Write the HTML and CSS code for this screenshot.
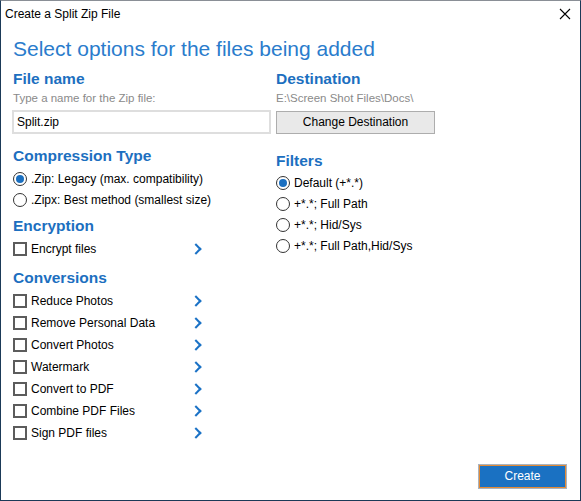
FILE: index.html
```html
<!DOCTYPE html>
<html>
<head>
<meta charset="utf-8">
<link rel="stylesheet" href="styles.css">
</head>
<body>
<div class="window">
  <div class="titlebar">
    <span class="title">Create a Split Zip File</span>
    <svg class="close" width="12" height="12" viewBox="0 0 12 12"><path d="M1 1L11 11M11 1L1 11" stroke="#000" stroke-width="1.1" fill="none"/></svg>
  </div>
  <div class="content">
    <h1 class="main-heading">Select options for the files being added</h1>
    <div class="grid">
      <div class="col">
        <h2 class="section">File name</h2>
        <div class="hint">Type a name for the Zip file:</div>
        <div class="input">Split.zip</div>
      </div>
      <div class="col">
        <h2 class="section">Destination</h2>
        <div class="hint">E:\Screen Shot Files\Docs\</div>
        <div class="btn">Change Destination</div>
      </div>
      <div class="col">
        <h2 class="section sec-compress">Compression Type</h2>
        <div class="radio-row"><span class="radio checked"></span>.Zip: Legacy (max. compatibility)</div>
        <div class="radio-row"><span class="radio"></span>.Zipx: Best method (smallest size)</div>

        <h2 class="section sec-encrypt">Encryption</h2>
        <div class="check-row"><span class="check"></span><span class="label">Encrypt files</span><span class="chev"></span></div>

        <h2 class="section sec-conv">Conversions</h2>
        <div class="check-row"><span class="check"></span><span class="label">Reduce Photos</span><span class="chev"></span></div>
        <div class="check-row"><span class="check"></span><span class="label">Remove Personal Data</span><span class="chev"></span></div>
        <div class="check-row"><span class="check"></span><span class="label">Convert Photos</span><span class="chev"></span></div>
        <div class="check-row"><span class="check"></span><span class="label">Watermark</span><span class="chev"></span></div>
        <div class="check-row"><span class="check"></span><span class="label">Convert to PDF</span><span class="chev"></span></div>
        <div class="check-row"><span class="check"></span><span class="label">Combine PDF Files</span><span class="chev"></span></div>
        <div class="check-row"><span class="check"></span><span class="label">Sign PDF files</span><span class="chev"></span></div>
      </div>
      <div class="col">
        <h2 class="section sec-filters">Filters</h2>
        <div class="radio-row"><span class="radio checked"></span>Default (+*.*)</div>
        <div class="radio-row"><span class="radio"></span>+*.*; Full Path</div>
        <div class="radio-row"><span class="radio"></span>+*.*; Hid/Sys</div>
        <div class="radio-row"><span class="radio"></span>+*.*; Full Path,Hid/Sys</div>
      </div>
    </div>
    <div class="footer">
      <div class="create">Create</div>
    </div>
  </div>
</div>
</body>
</html>
```
FILE: styles.css
```css
html, body {
  margin: 0;
  padding: 0;
  background: #fff;
}
body {
  font-family: "Liberation Sans", Arial, sans-serif;
  font-size: 12px;
  color: #000;
}
.window {
  width: 581px;
  height: 501px;
  box-sizing: border-box;
  border: 1px solid #1b3a58;
  border-top-color: #8a8f96;
  display: flex;
  flex-direction: column;
  background: #fff;
}
.titlebar {
  height: 29px;
  display: flex;
  align-items: center;
  justify-content: space-between;
  padding: 0 9px 0 4px;
  flex: none;
  margin-top: -2px;
}
.title {
  font-size: 12px;
}
.close {
  display: block;
}
.content {
  flex: 1;
  display: flex;
  flex-direction: column;
  padding: 0 12px 0 12px;
}
.main-heading {
  margin: 8px 0 0 0;
  font-weight: normal;
  font-size: 21px;
  line-height: 26px;
  color: #2a7ccc;
}
.grid {
  display: grid;
  grid-template-columns: 258px 1fr;
  column-gap: 5px;
  margin-top: 8px;
}
.section {
  margin: 0 0 3px 0;
  font-size: 15.5px;
  line-height: 18px;
  font-weight: bold;
  color: #1c6fc0;
}
.hint {
  color: #8a8a8a;
  font-size: 11.5px;
  line-height: 16px;
  margin-top: -1px;
}
.input {
  margin-top: 4px;
  height: 24px;
  box-sizing: border-box;
  border: 2px solid #dedede;
  padding: 0 0 0 3px;
  line-height: 20px;
  margin-left: -1px;
}
.btn {
  margin-top: 5px;
  height: 23px;
  width: 159px;
  box-sizing: border-box;
  border: 1px solid #adadad;
  background: #e9e9e9;
  text-align: center;
  line-height: 21px;
}
.sec-compress { margin-top: 13px; }
.sec-filters { margin-top: 18px; margin-bottom: 2px; }
.sec-encrypt { margin-top: 7px; }
.sec-conv { margin-top: 9px; }
.radio-row {
  display: flex;
  align-items: center;
  height: 21px;
  gap: 4px;
}
.radio {
  width: 14px;
  height: 14px;
  box-sizing: border-box;
  border: 1px solid #333;
  border-radius: 50%;
  position: relative;
  flex: none;
}
.radio.checked::after {
  content: "";
  position: absolute;
  left: 2px;
  top: 2px;
  width: 8px;
  height: 8px;
  border-radius: 50%;
  background: #1a6fc0;
}
.check-row {
  display: flex;
  align-items: center;
  height: 22px;
}
.check {
  width: 14px;
  height: 14px;
  box-sizing: border-box;
  border: 2px solid #5c5c5c;
  flex: none;
  margin-right: 4px;
}
.label {
  width: 158px;
}
.chev {
  width: 6px;
  height: 6px;
  border-right: 2px solid #1b72c6;
  border-top: 2px solid #1b72c6;
  transform: rotate(45deg);
  margin-left: 3px;
}
.footer {
  margin-top: auto;
  display: flex;
  justify-content: flex-end;
  padding: 0 1px 11px 0;
}
.create {
  width: 89px;
  height: 25px;
  box-sizing: border-box;
  border: 1px solid #a8b3bf;
  box-shadow: inset 0 0 0 1px #e38a35;
  background: #1a71c2;
  color: #fff;
  text-align: center;
  line-height: 23px;
}
```
